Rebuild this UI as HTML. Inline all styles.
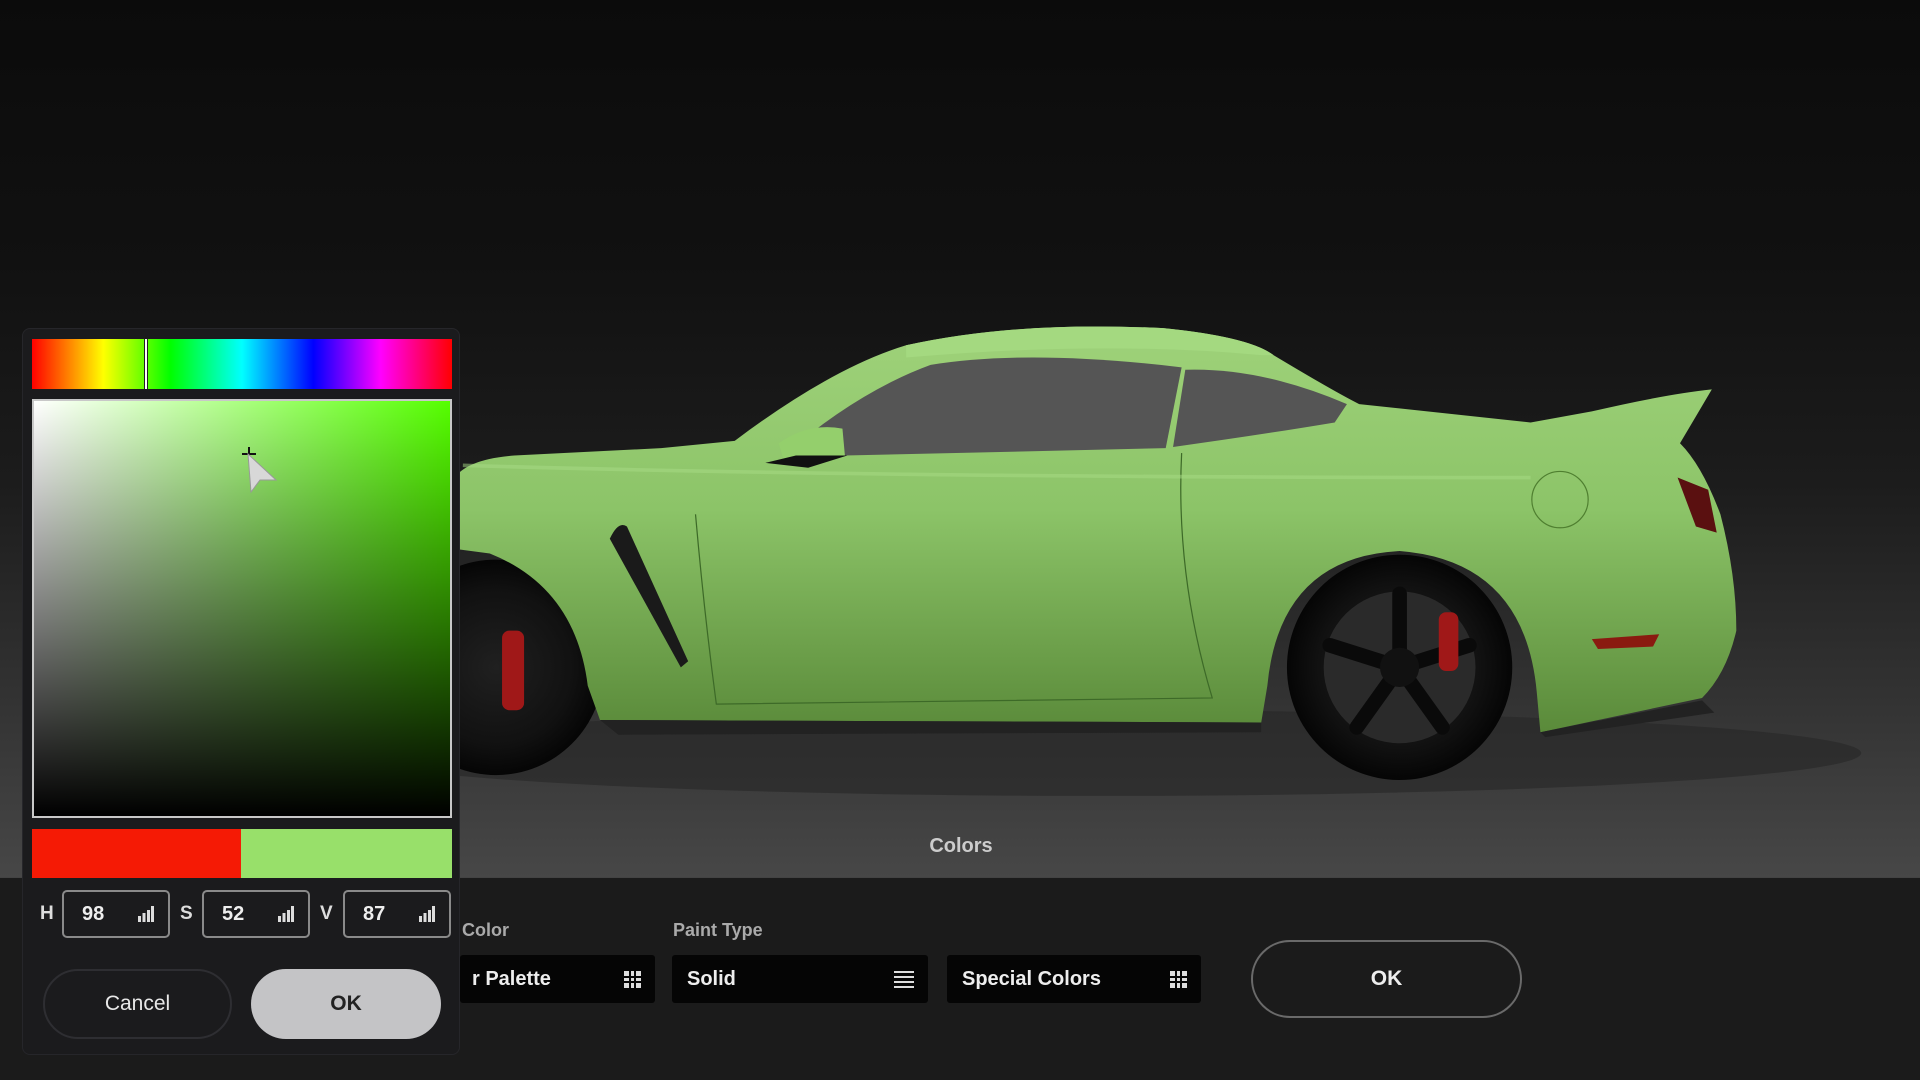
<!DOCTYPE html>
<html><head><meta charset="utf-8">
<style>
*{margin:0;padding:0;box-sizing:border-box}
body{width:1920px;height:1080px;overflow:hidden;background:#111;font-family:"Liberation Sans",sans-serif;position:relative}
.abs{position:absolute}
.panel{left:22px;top:328px;width:438px;height:727px;background:#1b1b1d;border-radius:8px;border:1px solid #26262a}
.hue{left:32px;top:339px;width:420px;height:50px;background:linear-gradient(to right,#f00 0%,#ff0 17%,#0f0 33%,#0ff 50%,#00f 67%,#f0f 83%,#f00 100%)}
.sv{left:32px;top:399px;width:420px;height:419px;border:2px solid #c8c8c8;background:linear-gradient(to bottom,rgba(0,0,0,0),#000),linear-gradient(to right,#fff,#5f0)}
.box{height:48px;border:2px solid #8a8a8a;border-radius:5px;color:#eee;font-size:20px;font-weight:bold;line-height:44px;padding-left:18px}
.lbl{color:#ddd;font-size:19px;font-weight:bold;top:903px}
.bars{position:absolute;right:14px;top:14px;width:16px;height:16px}
.drop{top:955px;height:48px;background:#050505;border-radius:3px;color:#eee;font-size:20px;font-weight:bold;line-height:48px;padding-left:15px}
.grid{position:absolute;right:14px;top:16px;width:17px;height:17px;background:
linear-gradient(#050505,#050505) 5px 0/2px 17px no-repeat,linear-gradient(#050505,#050505) 10px 0/2px 17px no-repeat,
linear-gradient(#050505,#050505) 0 5px/17px 2px no-repeat,linear-gradient(#050505,#050505) 0 10px/17px 2px no-repeat,#ddd}
</style></head><body>
<svg class="abs" style="left:0;top:0" width="1920" height="1080" viewBox="0 0 1568 882" preserveAspectRatio="none">
<defs>
<linearGradient id="bg" x1="0" y1="0" x2="0" y2="1"><stop offset="0" stop-color="#0b0b0b"/><stop offset="0.3" stop-color="#111"/><stop offset="0.55" stop-color="#1c1c1c"/><stop offset="0.8" stop-color="#333"/><stop offset="1" stop-color="#474747"/></linearGradient>
<linearGradient id="body" x1="0" y1="0" x2="0" y2="1"><stop offset="0" stop-color="#9fd27a"/><stop offset="0.45" stop-color="#8cc468"/><stop offset="0.8" stop-color="#6c9f4a"/><stop offset="1" stop-color="#5a8a3a"/></linearGradient>
<radialGradient id="wh" cx="0.5" cy="0.5" r="0.5"><stop offset="0" stop-color="#202020"/><stop offset="0.72" stop-color="#111"/><stop offset="1" stop-color="#050505"/></radialGradient>
</defs>
<rect width="1568" height="717" fill="url(#bg)"/>
<rect y="717" width="1568" height="165" fill="#1b1b1b"/>
<ellipse cx="900" cy="615" rx="620" ry="35" fill="#262626" opacity="0.6"/>
<circle cx="1143" cy="545" r="92" fill="url(#wh)"/>
<circle cx="1143" cy="545" r="62" fill="#2a2a2a"/>
<g stroke="#0a0a0a" stroke-width="12" stroke-linecap="round">
<line x1="1143" y1="545" x2="1143" y2="485"/><line x1="1143" y1="545" x2="1200" y2="527"/><line x1="1143" y1="545" x2="1178" y2="594"/><line x1="1143" y1="545" x2="1108" y2="594"/><line x1="1143" y1="545" x2="1086" y2="527"/></g>
<rect x="1175" y="500" width="16" height="48" rx="6" fill="#a01818"/>
<circle cx="1143" cy="545" r="16" fill="#111"/>
<circle cx="405" cy="545" r="88" fill="url(#wh)"/>
<rect x="410" y="515" width="18" height="65" rx="6" fill="#a01818"/>
<path d="M370 392 Q380 375 420 372 L540 366 L600 360 Q680 300 740 282 Q830 262 950 268 Q1020 275 1040 290 Q1090 320 1110 330 L1250 345 L1300 336 Q1360 322 1398 318 L1385 340 L1372 362 Q1390 380 1405 420 Q1418 470 1418 515 Q1410 550 1390 570 L1258 598 L1255 565 Q1245 458 1143 450 Q1045 455 1035 560 L1030 590 L490 588 L480 560 Q470 480 400 452 L370 448 Z" fill="url(#body)"/>
<path d="M640 372 Q700 320 760 298 Q840 285 965 300 L952 366 L690 372 Z" fill="#555"/>
<path d="M958 365 L968 302 Q1030 300 1100 330 L1090 345 Q1030 355 958 365 Z" fill="#555"/>
<path d="M740 282 Q830 262 950 268 Q1020 275 1040 290 L1030 290 Q900 278 740 292 Z" fill="#a4d980"/>
<path d="M636 362 Q660 345 688 350 L690 372 L640 376 Z" fill="#94cf6c"/>
<path d="M625 378 L650 372 L692 372 L660 382 Z" fill="#111"/>
<path d="M498 440 Q505 425 512 430 L562 540 L556 545 Z" fill="#1a1a1a"/>
<path d="M568 420 Q575 500 585 575 L990 570 Q960 470 965 370" fill="none" stroke="#3d6a28" stroke-width="1"/>
<path d="M378 380 Q700 390 1250 390" fill="none" stroke="#a8dc86" stroke-width="3" opacity="0.5"/>
<circle cx="1274" cy="408" r="23" fill="none" stroke="#4f7f30" stroke-width="1"/>
<path d="M1370 390 L1395 400 L1402 435 L1385 430 Z" fill="#5a1010"/>
<path d="M1300 522 L1355 518 L1350 528 L1305 530 Z" fill="#8a1a10"/>
<path d="M490 588 L1030 590 L1030 598 L505 600 Z M1258 598 L1390 572 L1400 582 L1262 602 Z" fill="#222"/>
</svg>

<div class="abs panel"></div>
<div class="abs hue"></div>
<div class="abs" style="left:144px;top:339px;width:4px;height:50px;background:#fff;border-left:1px solid #222;border-right:1px solid #222"></div>
<div class="abs sv"></div>
<svg class="abs" style="left:238px;top:442px" width="50" height="52"><path d="M4 12 H18 M11 5 V19" stroke="#111" stroke-width="2"/><path d="M10 12 L38 38 L22 38 L13 50 Z" fill="#d8d8d8" stroke="#999" stroke-width="1"/></svg>
<div class="abs" style="left:32px;top:829px;width:209px;height:49px;background:#f51a05"></div>
<div class="abs" style="left:241px;top:829px;width:211px;height:49px;background:#98e06a"></div>

<div class="abs lbl" style="left:40px">H</div>
<div class="abs box" style="left:62px;top:890px;width:108px">98<svg class="bars"><rect x="0" y="10" width="3" height="6" fill="#ddd"/><rect x="4.5" y="7" width="3" height="9" fill="#ddd"/><rect x="9" y="4" width="3" height="12" fill="#ddd"/><rect x="13" y="0" width="3" height="16" fill="#ddd"/></svg></div>
<div class="abs lbl" style="left:180px">S</div>
<div class="abs box" style="left:202px;top:890px;width:108px">52<svg class="bars"><rect x="0" y="10" width="3" height="6" fill="#ddd"/><rect x="4.5" y="7" width="3" height="9" fill="#ddd"/><rect x="9" y="4" width="3" height="12" fill="#ddd"/><rect x="13" y="0" width="3" height="16" fill="#ddd"/></svg></div>
<div class="abs lbl" style="left:320px">V</div>
<div class="abs box" style="left:343px;top:890px;width:108px">87<svg class="bars"><rect x="0" y="10" width="3" height="6" fill="#ddd"/><rect x="4.5" y="7" width="3" height="9" fill="#ddd"/><rect x="9" y="4" width="3" height="12" fill="#ddd"/><rect x="13" y="0" width="3" height="16" fill="#ddd"/></svg></div>

<div class="abs" style="left:43px;top:969px;width:189px;height:70px;border:2px solid #2e2e32;border-radius:35px;color:#e8e8e8;font-size:21px;text-align:center;line-height:66px">Cancel</div>
<div class="abs" style="left:251px;top:969px;width:190px;height:70px;background:#c4c4c6;border-radius:35px;color:#222;font-size:21px;font-weight:bold;text-align:center;line-height:70px">OK</div>

<div class="abs" style="left:900px;top:835px;width:122px;text-align:center;color:#ccc;font-size:20px;font-weight:bold">Colors</div>
<div class="abs" style="left:462px;top:920px;color:#aaa;font-size:18px;font-weight:bold">Color</div>
<div class="abs" style="left:673px;top:920px;color:#aaa;font-size:18px;font-weight:bold">Paint Type</div>
<div class="abs drop" style="left:460px;width:195px;padding-left:12px">r Palette<div class="grid"></div></div>
<div class="abs drop" style="left:672px;width:256px">Solid<svg style="position:absolute;right:14px;top:16px" width="20" height="17"><rect y="0" width="20" height="2" fill="#ddd"/><rect y="5" width="20" height="2" fill="#ddd"/><rect y="10" width="20" height="2" fill="#ddd"/><rect y="15" width="20" height="2" fill="#ddd"/></svg></div>
<div class="abs drop" style="left:947px;width:254px">Special Colors<div class="grid"></div></div>
<div class="abs" style="left:1251px;top:940px;width:271px;height:78px;border:2px solid #6a6a6a;border-radius:39px;color:#eee;font-size:21px;font-weight:bold;text-align:center;line-height:74px">OK</div>
</body></html>
